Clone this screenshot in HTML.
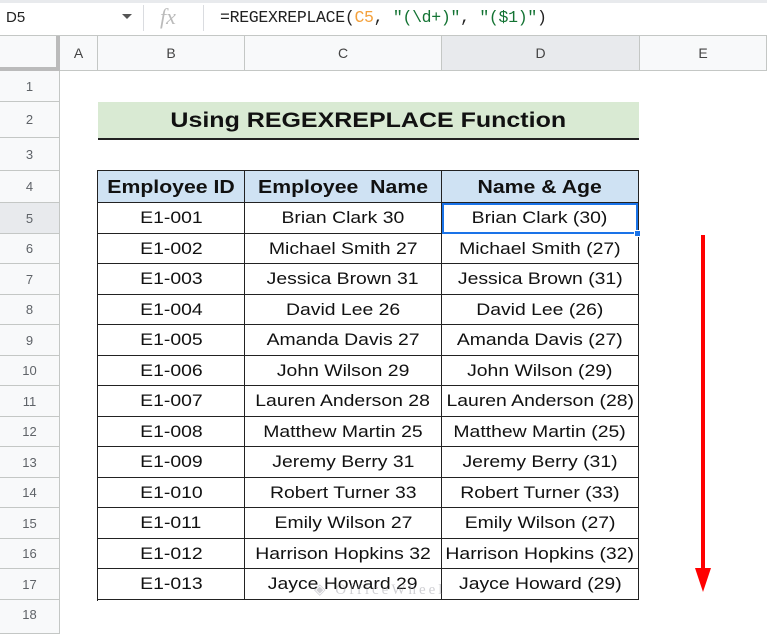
<!DOCTYPE html><html><head><style>
body{margin:0;width:767px;height:634px;overflow:hidden;background:#fff;font-family:"Liberation Sans",Arial,sans-serif;position:relative}
div{position:absolute;box-sizing:border-box}
.s{display:inline-block;transform:scaleX(1.14);transform-origin:center}
.rh{left:0;width:60px;background:#f8f9fa;border-bottom:1px solid #c4c7c5;border-right:1px solid #c4c7c5;color:#5f6368;font-size:13px;text-align:center}
.ch{top:36px;height:35px;background:#f8f9fa;border-right:1px solid #c4c7c5;border-bottom:1px solid #c4c7c5;color:#444;font-size:14px;text-align:center;line-height:34px}
.c{border-right:1px solid #222;border-bottom:1px solid #222;text-align:center;font-size:17px;color:#111;line-height:29px;white-space:nowrap}
</style></head><body>
<div style="left:0;top:0;width:767px;height:36px;border-bottom:1px solid #c4c7c5;border-top:3px solid #e8eaed"></div>
<div style="left:6px;top:9px;font-size:15px;color:#222">D5</div>
<div style="left:122px;top:14px;width:0;height:0;border-left:5px solid transparent;border-right:5px solid transparent;border-top:5px solid #555"></div>
<div style="left:143px;top:5px;height:26px;border-left:1px solid #dadce0"></div>
<div style="left:160px;top:4px;font-family:'Liberation Serif',serif;font-style:italic;font-size:22px;color:#bbb">fx</div>
<div style="left:203px;top:5px;height:26px;border-left:1px solid #dadce0"></div>
<div style="left:220px;top:8px;font-family:'Liberation Mono',monospace;font-size:16.5px;color:#222;letter-spacing:-0.3px;white-space:pre">=REGEXREPLACE(<span style="color:#f4a13c">C5</span>, <span style="color:#137333">"(\d+)"</span>, <span style="color:#137333">"($1)"</span>)</div>
<div class="ch" style="left:0;width:60px;border-right:4px solid #bbb;border-bottom:4px solid #bbb"></div>
<div class="ch" style="left:60px;width:38px">A</div>
<div class="ch" style="left:98px;width:147px">B</div>
<div class="ch" style="left:245px;width:197px">C</div>
<div class="ch" style="left:442px;width:198px;background:#e8eaed">D</div>
<div class="ch" style="left:640px;width:127px">E</div>
<div class="rh" style="top:71px;height:31px;line-height:31px">1</div>
<div class="rh" style="top:102px;height:36px;line-height:36px">2</div>
<div class="rh" style="top:138px;height:33px;line-height:33px">3</div>
<div class="rh" style="top:171px;height:32px;line-height:32px">4</div>
<div class="rh" style="top:203px;height:31px;line-height:31px;background:#e8eaed">5</div>
<div class="rh" style="top:234px;height:30px;line-height:30px">6</div>
<div class="rh" style="top:264px;height:31px;line-height:31px">7</div>
<div class="rh" style="top:295px;height:30px;line-height:30px">8</div>
<div class="rh" style="top:325px;height:31px;line-height:31px">9</div>
<div class="rh" style="top:356px;height:30px;line-height:30px">10</div>
<div class="rh" style="top:386px;height:31px;line-height:31px">11</div>
<div class="rh" style="top:417px;height:30px;line-height:30px">12</div>
<div class="rh" style="top:447px;height:31px;line-height:31px">13</div>
<div class="rh" style="top:478px;height:30px;line-height:30px">14</div>
<div class="rh" style="top:508px;height:31px;line-height:31px">15</div>
<div class="rh" style="top:539px;height:30px;line-height:30px">16</div>
<div class="rh" style="top:569px;height:31px;line-height:31px">17</div>
<div class="rh" style="top:600px;height:34px;line-height:30px">18</div>
<div style="left:98px;top:102px;width:541px;height:38px;background:#d9ead3;border-bottom:2px solid #222;text-align:center;font-weight:bold;font-size:21px;line-height:38px;color:#111"><span class="s" style="transform:scaleX(1.19)">Using REGEXREPLACE Function</span></div>
<div style="left:97px;top:170px;width:542px;height:431px;border:1px solid #222;border-width:1px 0 0 1px"></div>
<div class="c" style="left:98px;top:171px;width:147px;height:32px;background:#cfe2f3;font-weight:bold;font-size:18px;line-height:32px"><span class="s" style="transform:scaleX(1.18)">Employee ID</span></div>
<div class="c" style="left:245px;top:171px;width:197px;height:32px;background:#cfe2f3;font-weight:bold;font-size:18px;line-height:32px"><span class="s" style="transform:scaleX(1.18)">Employee&nbsp; Name</span></div>
<div class="c" style="left:442px;top:171px;width:197px;height:32px;background:#cfe2f3;font-weight:bold;font-size:18px;line-height:32px"><span class="s" style="transform:scaleX(1.18)">Name &amp; Age</span></div>
<div style="left:0;top:203px">
<div class="c" style="left:98px;top:0;width:147px;height:31px"><span class="s">E1-001</span></div><div class="c" style="left:245px;top:0;width:197px;height:31px"><span class="s">Brian Clark 30</span></div><div class="c" style="left:442px;top:0;width:197px;height:31px"><span class="s">Brian Clark (30)</span></div>
<div class="c" style="left:98px;top:31px;width:147px;height:30px"><span class="s">E1-002</span></div><div class="c" style="left:245px;top:31px;width:197px;height:30px"><span class="s">Michael Smith 27</span></div><div class="c" style="left:442px;top:31px;width:197px;height:30px"><span class="s">Michael Smith (27)</span></div>
<div class="c" style="left:98px;top:61px;width:147px;height:31px"><span class="s">E1-003</span></div><div class="c" style="left:245px;top:61px;width:197px;height:31px"><span class="s">Jessica Brown 31</span></div><div class="c" style="left:442px;top:61px;width:197px;height:31px"><span class="s">Jessica Brown (31)</span></div>
<div class="c" style="left:98px;top:92px;width:147px;height:30px"><span class="s">E1-004</span></div><div class="c" style="left:245px;top:92px;width:197px;height:30px"><span class="s">David Lee 26</span></div><div class="c" style="left:442px;top:92px;width:197px;height:30px"><span class="s">David Lee (26)</span></div>
<div class="c" style="left:98px;top:122px;width:147px;height:31px"><span class="s">E1-005</span></div><div class="c" style="left:245px;top:122px;width:197px;height:31px"><span class="s">Amanda Davis 27</span></div><div class="c" style="left:442px;top:122px;width:197px;height:31px"><span class="s">Amanda Davis (27)</span></div>
<div class="c" style="left:98px;top:153px;width:147px;height:30px"><span class="s">E1-006</span></div><div class="c" style="left:245px;top:153px;width:197px;height:30px"><span class="s">John Wilson 29</span></div><div class="c" style="left:442px;top:153px;width:197px;height:30px"><span class="s">John Wilson (29)</span></div>
<div class="c" style="left:98px;top:183px;width:147px;height:31px"><span class="s">E1-007</span></div><div class="c" style="left:245px;top:183px;width:197px;height:31px"><span class="s">Lauren Anderson 28</span></div><div class="c" style="left:442px;top:183px;width:197px;height:31px"><span class="s">Lauren Anderson (28)</span></div>
<div class="c" style="left:98px;top:214px;width:147px;height:30px"><span class="s">E1-008</span></div><div class="c" style="left:245px;top:214px;width:197px;height:30px"><span class="s">Matthew Martin 25</span></div><div class="c" style="left:442px;top:214px;width:197px;height:30px"><span class="s">Matthew Martin (25)</span></div>
<div class="c" style="left:98px;top:244px;width:147px;height:31px"><span class="s">E1-009</span></div><div class="c" style="left:245px;top:244px;width:197px;height:31px"><span class="s">Jeremy Berry 31</span></div><div class="c" style="left:442px;top:244px;width:197px;height:31px"><span class="s">Jeremy Berry (31)</span></div>
<div class="c" style="left:98px;top:275px;width:147px;height:30px"><span class="s">E1-010</span></div><div class="c" style="left:245px;top:275px;width:197px;height:30px"><span class="s">Robert Turner 33</span></div><div class="c" style="left:442px;top:275px;width:197px;height:30px"><span class="s">Robert Turner (33)</span></div>
<div class="c" style="left:98px;top:305px;width:147px;height:31px"><span class="s">E1-011</span></div><div class="c" style="left:245px;top:305px;width:197px;height:31px"><span class="s">Emily Wilson 27</span></div><div class="c" style="left:442px;top:305px;width:197px;height:31px"><span class="s">Emily Wilson (27)</span></div>
<div class="c" style="left:98px;top:336px;width:147px;height:30px"><span class="s">E1-012</span></div><div class="c" style="left:245px;top:336px;width:197px;height:30px"><span class="s">Harrison Hopkins 32</span></div><div class="c" style="left:442px;top:336px;width:197px;height:30px"><span class="s">Harrison Hopkins (32)</span></div>
<div class="c" style="left:98px;top:366px;width:147px;height:31px"><span class="s">E1-013</span></div><div class="c" style="left:245px;top:366px;width:197px;height:31px"><span class="s">Jayce Howard 29</span></div><div class="c" style="left:442px;top:366px;width:197px;height:31px"><span class="s">Jayce Howard (29)</span></div>
</div>
<div style="left:442px;top:203px;width:196px;height:31px;border:2px solid #1a73e8"></div>
<div style="left:634px;top:230px;width:7px;height:7px;background:#1a73e8;border:1px solid #fff"></div>
<div style="left:314px;top:580px;font-family:'Liberation Serif',serif;font-size:15px;letter-spacing:3px;color:rgba(150,150,160,0.45)">◈ OfficeWheel</div>
<div style="left:701px;top:235px;width:4px;height:335px;background:#f00"></div>
<div style="left:695px;top:568px;width:0;height:0;border-left:8px solid transparent;border-right:8px solid transparent;border-top:24px solid #f00"></div>
</body></html>
